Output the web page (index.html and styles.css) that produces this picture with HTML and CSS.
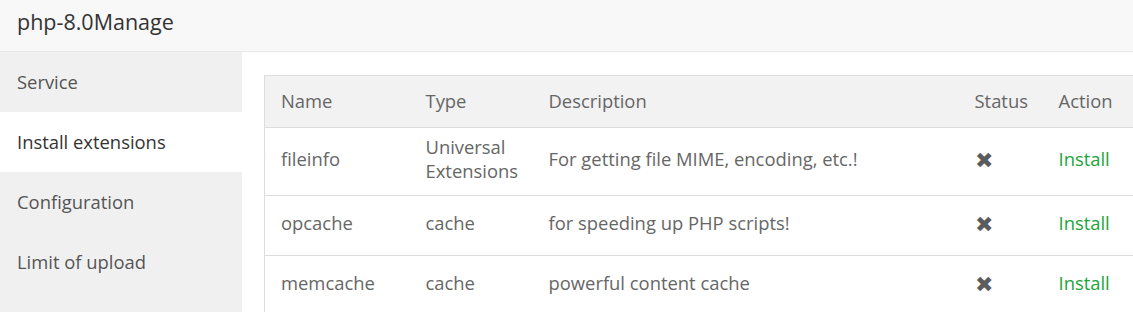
FILE: index.html
```html
<!DOCTYPE html>
<html>
<head>
<meta charset="utf-8">
<link rel="stylesheet" href="styles.css">
</head>
<body>
<div class="header">php-8.0Manage</div>
<div class="main">
  <div class="sidebar">
    <div class="item">Service</div>
    <div class="item active">Install extensions</div>
    <div class="item">Configuration</div>
    <div class="item">Limit of upload</div>
  </div>
  <div class="content">
    <table class="ext">
      <colgroup>
        <col class="c-name"><col class="c-type"><col class="c-desc"><col class="c-status"><col class="c-action">
      </colgroup>
      <thead>
        <tr><th>Name</th><th>Type</th><th>Description</th><th>Status</th><th>Action</th></tr>
      </thead>
      <tbody>
        <tr class="tall"><td>fileinfo</td><td>Universal Extensions</td><td>For getting file MIME, encoding, etc.!</td><td class="st">&#10006;</td><td><a class="inst">Install</a></td></tr>
        <tr><td>opcache</td><td>cache</td><td>for speeding up PHP scripts!</td><td class="st">&#10006;</td><td><a class="inst">Install</a></td></tr>
        <tr><td>memcache</td><td>cache</td><td>powerful content cache</td><td class="st">&#10006;</td><td><a class="inst">Install</a></td></tr>
      </tbody>
    </table>
  </div>
</div>
</body>
</html>
```
FILE: styles.css
```css
* { box-sizing: border-box; }
html, body { margin: 0; padding: 0; }
body {
  font-family: "Open Sans", "Noto Sans", sans-serif;
  width: 1133px;
  height: 312px;
  overflow: hidden;
  background: #fff;
}
.header {
  height: 52px;
  background: #f8f8f8;
  border-bottom: 1px solid #e8e8e8;
  color: #333;
  font-size: 21.5px;
  line-height: 44px;
  padding-left: 17px;
}
.main {
  display: flex;
  height: 260px;
}
.sidebar {
  width: 242px;
  background: #f0f0f0;
  flex: none;
}
.item {
  height: 60px;
  line-height: 60px;
  padding-left: 17px;
  font-size: 18.4px;
  color: #555;
}
.item.active { background: #fff; color: #333; }
.content {
  flex: 1;
  padding: 23px 0 0 22px;
}
.ext {
  border-collapse: collapse;
  width: 869px;
  table-layout: fixed;
  font-size: 18.4px;
  color: #666;
}
.c-name { width: 145px; }
.c-type { width: 123px; }
.c-desc { width: 426px; }
.c-status { width: 84px; }
.c-action { width: 91px; }
.ext th, .ext td {
  text-align: left;
  font-weight: normal;
  padding: 0 6px 0 16px;
  border-top: 1px solid #ddd;
  border-bottom: 1px solid #ddd;
  line-height: 24px;
}
.ext th {
  background: #f2f2f2;
  height: 52px;
  color: #666;
  padding-bottom: 2px;
}
.ext th:first-child, .ext td:first-child { border-left: 1px solid #ddd; }
.ext td { height: 60px; padding-bottom: 5px; }
.ext tr.tall td { height: 68px; }
.st { color: #5c5c5c; font-size: 22px; }
.inst { color: #20a53a; text-decoration: none; }
```
